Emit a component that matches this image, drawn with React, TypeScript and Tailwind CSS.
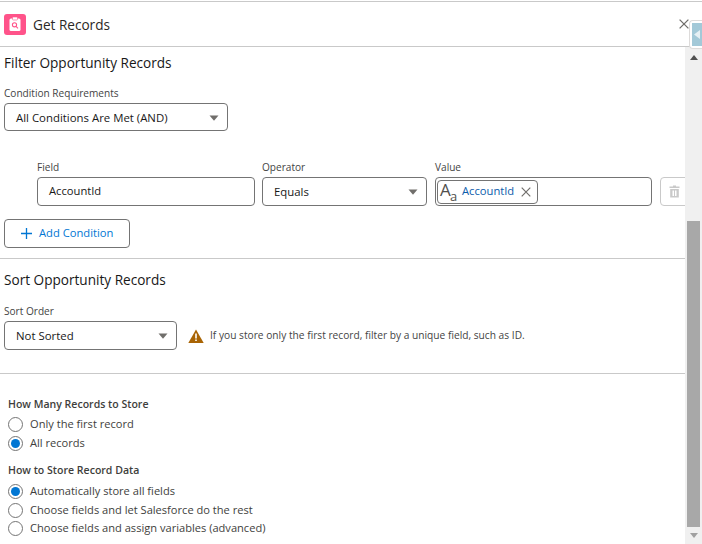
import React from "react";

function Chevron() {
  return (
    <svg width="10" height="6" viewBox="0 0 10 6" className="shrink-0">
      <path d="M0.5 0.5H9.5L5 5.8Z" fill="#706e6b" />
    </svg>
  );
}

function Select({ text, className }: { text: string; className: string }) {
  return (
    <div className={`flex items-center justify-between rounded border border-[#747474] bg-white pl-[11px] pr-[8px] text-[11.4px] text-[#181818] ${className}`}>
      <span>{text}</span>
      <Chevron />
    </div>
  );
}

function Radio({ label, checked, tall }: { label: string; checked?: boolean; tall?: boolean }) {
  return (
    <div className={`flex items-center pl-[8px] text-[11.1px] text-[#3e3e3c] ${tall ? "h-[19px]" : "h-[18.5px]"}`}>
      <span className="mr-[7px] flex h-[15px] w-[15px] items-center justify-center rounded-full border border-[#747474] bg-white">
        {checked && <span className="h-[9px] w-[9px] rounded-full bg-[#0176d3]" />}
      </span>
      {label}
    </div>
  );
}

export default function App() {
  return (
    <div className="relative flex h-[544px] w-[702px] flex-col overflow-hidden bg-white font-['Open_Sans',sans-serif] text-[#181818]">
      <div className="mt-px flex h-[46px] w-[702px] shrink-0 items-center border-y border-[#c9c9c9] pl-1 pr-[13px]">
        <div className="flex h-[21px] w-[22px] items-center justify-center rounded-[3px] bg-[#ff538a]">
          <svg width="14" height="16" viewBox="0 0 14 16">
            <rect x="1.5" y="2.5" width="11" height="12.5" rx="1.5" fill="#fff" />
            <rect x="4.5" y="1" width="5" height="3" rx="0.8" fill="#fff" stroke="#ff538a" strokeWidth="0.6" />
            <circle cx="6.5" cy="8.8" r="2.1" fill="none" stroke="#ff538a" strokeWidth="1.1" />
            <path d="M8 10.4L10 12.4" stroke="#ff538a" strokeWidth="1.1" />
          </svg>
        </div>
        <span className="ml-[7px] pt-[2px] text-[13.6px] text-[#2b2826]">Get Records</span>
        <svg width="10" height="10" viewBox="0 0 10 10" className="ml-auto">
          <path d="M0.6 0.6L9.4 9.4M9.4 0.6L0.6 9.4" stroke="#706e6b" strokeWidth="1.3" />
        </svg>
      </div>

      <div className="flex min-h-0 flex-1">
        <div className="w-[685px] shrink-0 overflow-hidden">
          <div className="flex h-[31px] items-center pl-1 pt-[2px] text-[13.6px] text-[#181818]">Filter Opportunity Records</div>
          <div className="mt-[7px] flex h-[16px] items-center pl-1 pt-[2px] text-[10.1px] text-[#444444]">Condition Requirements</div>
          <Select text="All Conditions Are Met (AND)" className="ml-1 mt-[2px] h-[28px] w-[224px] pt-[2px]" />

          <div className="mt-[28px] flex pl-[37px]">
            <div className="w-[218px] shrink-0">
              <div className="flex h-[16px] items-center pt-[2px] text-[10.1px] text-[#444444]">Field</div>
              <div className="mt-[2px] flex h-[29px] items-center rounded border border-[#747474] pl-[11px] text-[11.2px]">AccountId</div>
            </div>
            <div className="ml-[7px] w-[165px] shrink-0">
              <div className="flex h-[16px] items-center pt-[2px] text-[10.1px] text-[#444444]">Operator</div>
              <Select text="Equals" className="mt-[2px] h-[29px]" />
            </div>
            <div className="ml-[8px] w-[217px] shrink-0">
              <div className="flex h-[16px] items-center pt-[2px] text-[10.1px] text-[#444444]">Value</div>
              <div className="mt-[2px] flex h-[29px] items-center rounded border border-[#747474] pl-[1px]">
                <div className="flex h-[24px] w-[101px] items-center rounded border border-[#747474] pl-[2px] text-[11.2px]">
                  <span className="relative h-[20px] w-[19px] shrink-0 text-[#514f4d]">
                    <span className="absolute left-0 top-[-3px] text-[17px] leading-[22px]">A</span>
                    <span className="absolute left-[10px] top-[6px] text-[13px] leading-[16px]">a</span>
                  </span>
                  <span className="ml-[3px] text-[#0b5cab]">AccountId</span>
                  <svg width="10" height="10" viewBox="0 0 10 10" className="ml-[7px] shrink-0">
                    <path d="M0.7 0.7L9.3 9.3M9.3 0.7L0.7 9.3" stroke="#706e6b" strokeWidth="1.2" />
                  </svg>
                </div>
              </div>
            </div>
            <div className="ml-[8px] mt-[18px] flex h-[29px] w-[32px] shrink-0 items-center rounded-l border border-[#c9c9c9] pl-[8px]">
              <svg width="11" height="13" viewBox="0 0 11 13">
                <path d="M4 0.5H7V1.5H10.5V3H0.5V1.5H4Z M1.2 4H9.8V12.5H1.2Z M3.5 5.5V11H5V5.5Z M6 5.5V11H7.5V5.5Z" fill="#c9c9c9" fillRule="evenodd" />
              </svg>
            </div>
          </div>

          <div className="ml-1 mt-[13px] flex h-[29px] w-[126px] items-center rounded border border-[#747474] pl-[16px] text-[11.2px] text-[#0176d3]">
            <svg width="11" height="11" viewBox="0 0 11 11" className="mr-[7px]">
              <path d="M5.5 0V11M0 5.5H11" stroke="#0176d3" strokeWidth="1.3" />
            </svg>
            Add Condition
          </div>

          <div className="mt-[10px] border-t border-[#c9c9c9]" />

          <div className="mt-[9px] flex h-[22px] items-center pl-1 pt-[2px] text-[13.6px]">Sort Opportunity Records</div>
          <div className="mt-[13px] flex h-[16px] items-center pl-1 pt-[2px] text-[10.1px] text-[#444444]">Sort Order</div>
          <div className="ml-1 mt-[2px] flex items-center">
            <Select text="Not Sorted" className="h-[29px] w-[173px]" />
            <svg width="16" height="14" viewBox="0 0 16 14" className="ml-[11px]">
              <path d="M8 0.5L15.7 14H0.3Z" fill="#a96404" />
              <path d="M7.2 4.5H8.8V9.5H7.2ZM7.2 10.5H8.8V12H7.2Z" fill="#fff" />
            </svg>
            <span className="ml-[6px] text-[10.2px] text-[#444444]">If you store only the first record, filter by a unique field, such as ID.</span>
          </div>

          <div className="mt-[23px] border-t border-[#c9c9c9]" />

          <div className="mt-[22px] flex h-[16px] items-center pl-2 pt-[2px] text-[10.55px] font-semibold text-[#3e3e3c]">How Many Records to Store</div>
          <div className="mt-[3px]">
            <Radio label="Only the first record" tall />
            <Radio label="All records" checked tall />
          </div>
          <div className="mt-[9px] flex h-[16px] items-center pl-2 pt-[2px] text-[10.55px] font-semibold text-[#3e3e3c]">How to Store Record Data</div>
          <div className="mt-[4px]">
            <Radio label="Automatically store all fields" checked />
            <Radio label="Choose fields and let Salesforce do the rest" tall />
            <Radio label="Choose fields and assign variables (advanced)" />
          </div>
        </div>

        <div className="flex w-[17px] shrink-0 flex-col items-center bg-[#f0f0f0]">
          <svg width="8" height="5" viewBox="0 0 8 5" className="mt-[8px]"><path d="M4 0L8 5H0Z" fill="#505050" /></svg>
          <div className="mt-[161px] h-[306px] w-[13px] bg-[#a8a8a8]" />
          <svg width="8" height="5" viewBox="0 0 8 5" className="mt-[6px]"><path d="M0 0H8L4 5Z" fill="#a0a0a0" /></svg>
        </div>
      </div>

      <div className="absolute left-[689px] top-[20px] flex h-[29px] w-[13px] items-center rounded-l border border-r-0 border-[#dddbda] bg-white pl-[2px]">
        <div className="flex h-[23px] w-[10px] items-center justify-center bg-[#a3c9d8]">
          <svg width="6" height="9" viewBox="0 0 6 9"><path d="M6 0V9L0 4.5Z" fill="#e6f0f4" /></svg>
        </div>
      </div>
    </div>
  );
}
